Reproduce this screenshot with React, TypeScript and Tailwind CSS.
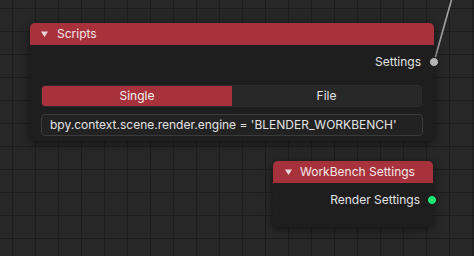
import React from "react";

const font = { fontFamily: 'Inter, "DejaVu Sans", sans-serif' };

function Tri() {
  return (
    <svg width="7" height="6" viewBox="0 0 7 6" className="shrink-0">
      <path d="M0 0.5 L7 0.5 L3.5 6 Z" fill="#e3d8da" />
    </svg>
  );
}

export default function App() {
  return (
    <div
      className="relative w-[474px] h-[256px] overflow-hidden bg-[#272727] text-[#e4e4e4] text-[12px] bg-[linear-gradient(to_right,#1c1c1c_1px,transparent_1px),linear-gradient(to_bottom,#1c1c1c_1px,transparent_1px)] bg-[size:23px_23px] bg-[position:12px_8px]"
      style={font}
    >
      {/* wire */}
      <svg className="absolute left-0 top-0" width="474" height="256">
        <path d="M434 62 C 440 40, 446 20, 452 -2" stroke="#a3a3a3" strokeWidth="1.6" fill="none" />
      </svg>

      {/* Scripts node */}
      <div className="absolute left-[30px] top-[23px] w-[404px] h-[118px] rounded-[5px] bg-[#1e1e1e] shadow-[0_2px_8px_rgba(0,0,0,0.55)] flex flex-col">
        <div className="h-[22px] bg-[#a8323c] rounded-t-[5px] flex items-center pl-[11px] gap-[9px] text-[#f3e8ea] text-[12px]">
          <Tri />
          <span>Scripts</span>
        </div>
        <div className="flex justify-end items-center h-[22px] mt-[6px] pr-[13px]">Settings</div>
        <div className="mt-[12px] mx-[11px] mr-[12px] h-[22px] flex rounded-[4px] overflow-hidden border border-[#2e2e2e]">
          <div className="w-[190px] bg-[#a8323c] flex items-center justify-center text-[#f2f2f2]">Single</div>
          <div className="flex-1 bg-[#282828] flex items-center justify-center">File</div>
        </div>
        <div className="mt-[7px] mx-[11px] mr-[11px] h-[22px] rounded-[4px] bg-[#222222] border border-[#3a3a3a] flex items-center pl-[8px] whitespace-nowrap">
          bpy.context.scene.render.engine = 'BLENDER_WORKBENCH'
        </div>
        <div className="absolute left-[399px] top-[34px] w-[10px] h-[10px] rounded-full bg-[#b4b4b4] border border-[#1a1a1a]" />
      </div>

      {/* WorkBench node */}
      <div className="absolute left-[273px] top-[161px] w-[160px] h-[66px] rounded-[5px] bg-[#1e1e1e] shadow-[0_2px_8px_rgba(0,0,0,0.55)] flex flex-col">
        <div className="h-[22px] bg-[#a8323c] rounded-t-[5px] flex items-center pl-[12px] gap-[8px] text-[#f3e8ea] text-[12px]">
          <Tri />
          <span>WorkBench Settings</span>
        </div>
        <div className="flex justify-end items-center h-[22px] mt-[6px] pr-[13px]">Render Settings</div>
        <div className="absolute left-[154px] top-[34px] w-[10px] h-[10px] rounded-full bg-[#1ee873] border border-[#1a1a1a]" />
      </div>
    </div>
  );
}
